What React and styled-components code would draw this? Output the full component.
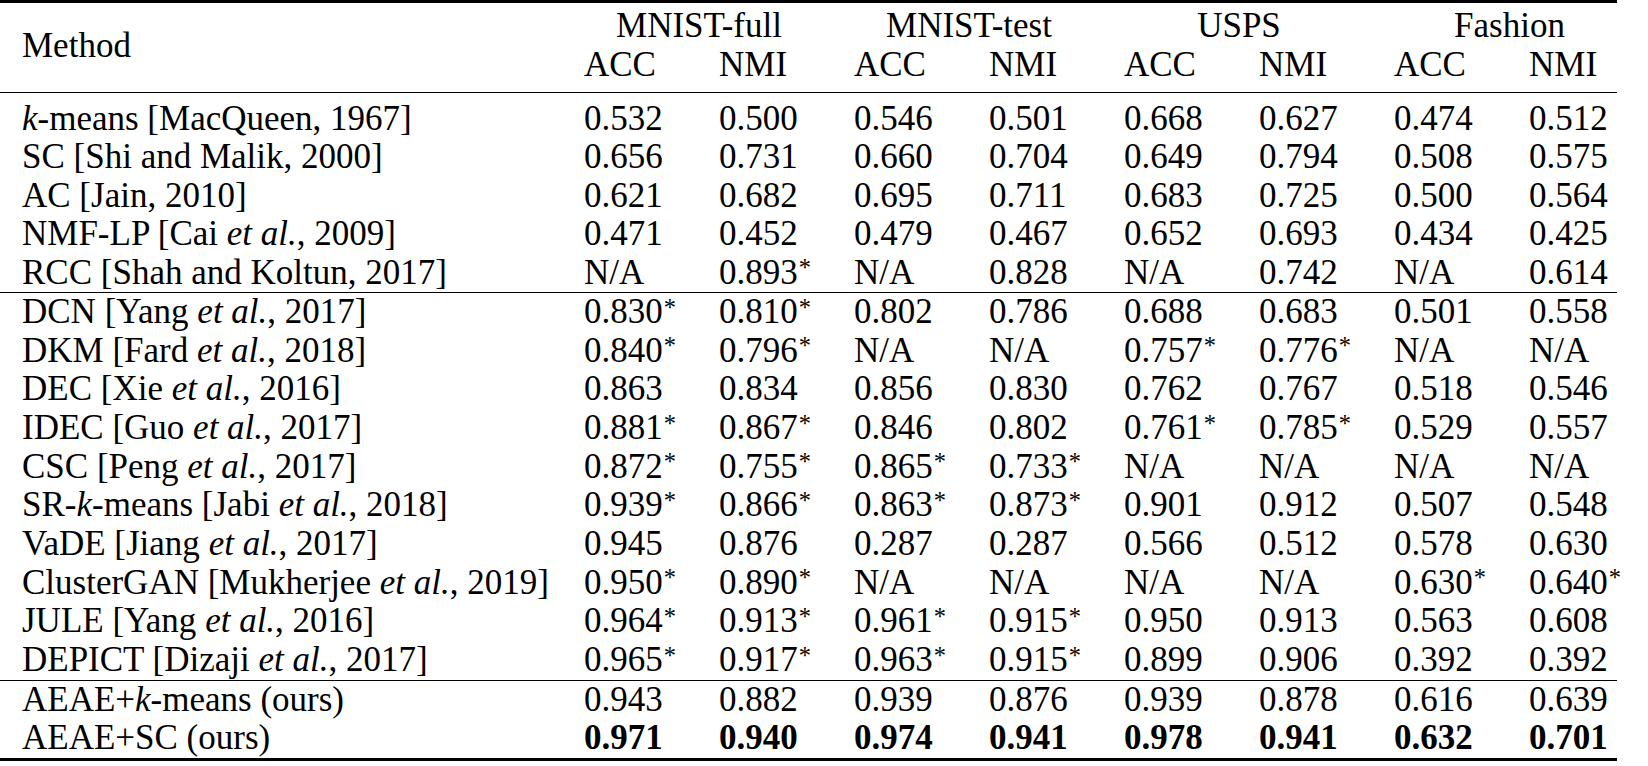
import React from 'react';
import styled, { createGlobalStyle } from 'styled-components';

const GlobalStyle = createGlobalStyle`
  html, body {
    margin: 0;
    padding: 0;
    background: #fff;
  }
  body {
    font-family: "Liberation Serif", "Times New Roman", serif;
    font-size: 35px;
    color: #000;
  }
`;

const COLS = '564px repeat(7, 135px) 108px';

const Table = styled.div`
  width: 1617px;
  border-top: 3px solid #000;
  border-bottom: 3px solid #000;
`;

const Header = styled.div`
  display: grid;
  grid-template-columns: ${COLS};
  grid-template-rows: 39px 39px;
  line-height: 39px;
  padding: 3px 0 8px;
  border-bottom: 1.3px solid #000;
`;

const MethodHead = styled.div`
  grid-row: 1 / span 2;
  grid-column: 1;
  align-self: center;
  padding-left: 22px;
`;

const GroupHead = styled.div`
  grid-row: 1;
  grid-column: span 2;
  text-align: center;
  padding-left: ${(p) => p.$shift || 0}px;
  white-space: nowrap;
`;

const SubHead = styled.div`
  grid-row: 2;
  padding-left: 20px;
`;

const Section = styled.div`
  padding-top: ${(p) => p.$pad || 0}px;
  & + & {
    border-top: 1.3px solid #000;
  }
`;

const Row = styled.div`
  display: grid;
  grid-template-columns: ${COLS};
  height: ${(p) => p.$h}px;
  line-height: ${(p) => p.$h}px;
  font-weight: ${(p) => (p.$bold ? 700 : 400)};
  white-space: nowrap;
`;

const Name = styled.div`
  padding-left: 22px;
  font-weight: 400;
`;

const Cell = styled.div`
  padding-left: 20px;
`;

const Star = styled.span`
  font-size: 0.7em;
  vertical-align: 0.3em;
  line-height: 0;
  margin-left: 1px;
`;

const Em = styled.i``;

const datasets = [
  { name: 'MNIST-full', shift: 0 },
  { name: 'MNIST-test', shift: 0 },
  { name: 'USPS', shift: 0 },
  { name: 'Fashion', shift: 28 },
];

const groups = [
  {
    pad: 7,
    h: 38.4,
    rows: [
      { name: <><Em>k</Em>-means [MacQueen, 1967]</>, v: ['0.532', '0.500', '0.546', '0.501', '0.668', '0.627', '0.474', '0.512'] },
      { name: <>SC [Shi and Malik, 2000]</>, v: ['0.656', '0.731', '0.660', '0.704', '0.649', '0.794', '0.508', '0.575'] },
      { name: <>AC [Jain, 2010]</>, v: ['0.621', '0.682', '0.695', '0.711', '0.683', '0.725', '0.500', '0.564'] },
      { name: <>NMF-LP [Cai <Em>et al.</Em>, 2009]</>, v: ['0.471', '0.452', '0.479', '0.467', '0.652', '0.693', '0.434', '0.425'] },
      { name: <>RCC [Shah and Koltun, 2017]</>, v: ['N/A', '0.893*', 'N/A', '0.828', 'N/A', '0.742', 'N/A', '0.614'] },
    ],
  },
  {
    pad: 0,
    h: 38.7,
    rows: [
      { name: <>DCN [Yang <Em>et al.</Em>, 2017]</>, v: ['0.830*', '0.810*', '0.802', '0.786', '0.688', '0.683', '0.501', '0.558'] },
      { name: <>DKM [Fard <Em>et al.</Em>, 2018]</>, v: ['0.840*', '0.796*', 'N/A', 'N/A', '0.757*', '0.776*', 'N/A', 'N/A'] },
      { name: <>DEC [Xie <Em>et al.</Em>, 2016]</>, v: ['0.863', '0.834', '0.856', '0.830', '0.762', '0.767', '0.518', '0.546'] },
      { name: <>IDEC [Guo <Em>et al.</Em>, 2017]</>, v: ['0.881*', '0.867*', '0.846', '0.802', '0.761*', '0.785*', '0.529', '0.557'] },
      { name: <>CSC [Peng <Em>et al.</Em>, 2017]</>, v: ['0.872*', '0.755*', '0.865*', '0.733*', 'N/A', 'N/A', 'N/A', 'N/A'] },
      { name: <>SR-<Em>k</Em>-means [Jabi <Em>et al.</Em>, 2018]</>, v: ['0.939*', '0.866*', '0.863*', '0.873*', '0.901', '0.912', '0.507', '0.548'] },
      { name: <>VaDE [Jiang <Em>et al.</Em>, 2017]</>, v: ['0.945', '0.876', '0.287', '0.287', '0.566', '0.512', '0.578', '0.630'] },
      { name: <>ClusterGAN [Mukherjee <Em>et al.</Em>, 2019]</>, v: ['0.950*', '0.890*', 'N/A', 'N/A', 'N/A', 'N/A', '0.630*', '0.640*'] },
      { name: <>JULE [Yang <Em>et al.</Em>, 2016]</>, v: ['0.964*', '0.913*', '0.961*', '0.915*', '0.950', '0.913', '0.563', '0.608'] },
      { name: <>DEPICT [Dizaji <Em>et al.</Em>, 2017]</>, v: ['0.965*', '0.917*', '0.963*', '0.915*', '0.899', '0.906', '0.392', '0.392'] },
    ],
  },
  {
    pad: 0,
    h: 38.6,
    rows: [
      { name: <>AEAE+<Em>k</Em>-means (ours)</>, v: ['0.943', '0.882', '0.939', '0.876', '0.939', '0.878', '0.616', '0.639'] },
      { name: <>AEAE+SC (ours)</>, v: ['0.971', '0.940', '0.974', '0.941', '0.978', '0.941', '0.632', '0.701'], bold: true },
    ],
  },
];

function Value({ text }) {
  if (text.endsWith('*')) {
    return <>{text.slice(0, -1)}<Star>*</Star></>;
  }
  return text;
}

export default function App() {
  return (
    <>
      <GlobalStyle />
      <Table>
        <Header>
          <MethodHead>Method</MethodHead>
          {datasets.map((d) => (
            <GroupHead key={d.name} $shift={d.shift}>{d.name}</GroupHead>
          ))}
          {datasets.map((d) => (
            <React.Fragment key={'sub' + d.name}>
              <SubHead>ACC</SubHead>
              <SubHead>NMI</SubHead>
            </React.Fragment>
          ))}
        </Header>
        {groups.map((g, gi) => (
          <Section key={'g' + gi} $pad={g.pad}>
            {g.rows.map((r, ri) => (
              <Row key={'r' + ri} $h={g.h} $bold={r.bold}>
                <Name>{r.name}</Name>
                {r.v.map((val, vi) => (
                  <Cell key={vi}>
                    <Value text={val} />
                  </Cell>
                ))}
              </Row>
            ))}
          </Section>
        ))}
      </Table>
    </>
  );
}
